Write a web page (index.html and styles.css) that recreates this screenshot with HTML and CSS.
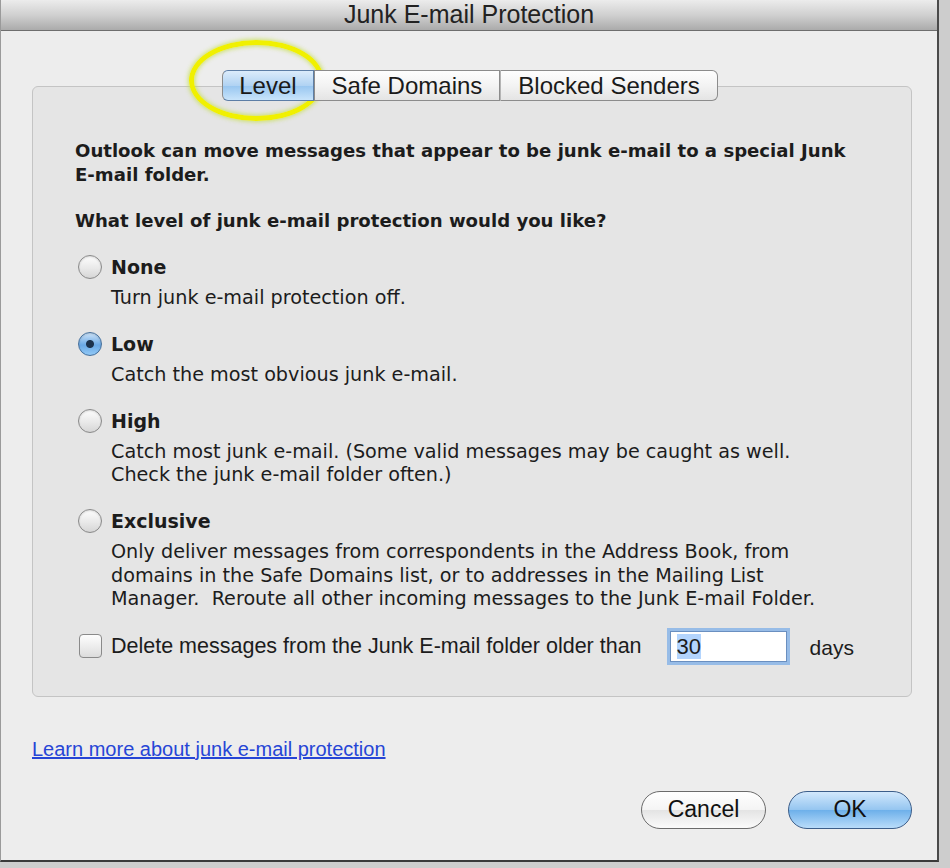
FILE: index.html
```html
<!DOCTYPE html>
<html lang="en">
<head>
    <meta charset="UTF-8">
    <meta name="viewport" content="width=device-width, initial-scale=1.0">
    <title>Junk E-mail Protection</title>
    <link rel="stylesheet" href="styles.css">
</head>
<body>
    <div class="window">
        <div class="titlebar">Junk E-mail Protection</div>
        <div class="content">
            <div class="tabs">
                <span class="tab tab-active">Level</span>
                <span class="tab">Safe Domains</span>
                <span class="tab">Blocked Senders</span>
            </div>
            <div class="tab-box">
                <p class="intro">Outlook can move messages that appear to be junk e-mail to a special Junk<br>E-mail folder.</p>
                <p class="intro">What level of junk e-mail protection would you like?</p>

                <div class="option">
                    <span class="radio"></span>
                    <div>
                        <div class="opt-title">None</div>
                        <div class="opt-desc">Turn junk e-mail protection off.</div>
                    </div>
                </div>
                <div class="option">
                    <span class="radio radio-on"></span>
                    <div>
                        <div class="opt-title">Low</div>
                        <div class="opt-desc">Catch the most obvious junk e-mail.</div>
                    </div>
                </div>
                <div class="option">
                    <span class="radio"></span>
                    <div>
                        <div class="opt-title">High</div>
                        <div class="opt-desc">Catch most junk e-mail. (Some valid messages may be caught as well.<br>Check the junk e-mail folder often.)</div>
                    </div>
                </div>
                <div class="option">
                    <span class="radio"></span>
                    <div>
                        <div class="opt-title">Exclusive</div>
                        <div class="opt-desc">Only deliver messages from correspondents in the Address Book, from<br>domains in the Safe Domains list, or to addresses in the Mailing List<br>Manager.&nbsp; Reroute all other incoming messages to the Junk E-mail Folder.</div>
                    </div>
                </div>

                <div class="delete-row">
                    <span class="checkbox"></span>
                    <span class="delete-label">Delete messages from the Junk E-mail folder older than</span>
                    <span class="days-input"><span class="sel">30</span></span>
                    <span class="days">days</span>
                </div>
            </div>

            <a class="learn-link" href="#">Learn more about junk e-mail protection</a>

            <div class="buttons">
                <button class="btn">Cancel</button>
                <button class="btn btn-default">OK</button>
            </div>
        </div>
        <!-- marker drawn round the Level tab -->
        <div class="highlight-ring"></div>
    </div>
</body>
</html>
```

FILE: styles.css
```css
body {
    margin: 0;
    background-color: #cdcdcd;
    font-family: "DejaVu Sans", sans-serif;
    color: #1c1c1c;
}
.window {
    position: relative;
    width: 936px;
    height: 860px;
    background-color: #ededed;
    border-left: 1px solid #9a9a9a;
    border-right: 2px solid #4a4a4a;
    border-bottom: 2px solid #3a3a3a;
    overflow: hidden;
}
.titlebar {
    height: 30px;
    line-height: 29px;
    text-align: center;
    font-family: "Liberation Sans", Arial, sans-serif;
    font-size: 25px;
    color: #222;
    background: linear-gradient(#ececec, #d0d0d0 50%, #ababab);
    border-bottom: 1px solid #6e6e6e;
}
.content {
    padding: 39px 25px 0 31px;
}

/* segmented tab control */
.tabs {
    position: relative;
    z-index: 1;
    display: flex;
    justify-content: center;
    padding-right: 4px;
    margin-bottom: -15px;
}
.tab {
    height: 29px;
    line-height: 29px;
    padding: 0 17px;
    font-family: "Liberation Sans", Arial, sans-serif;
    font-size: 24px;
    color: #1a1a1a;
    background: linear-gradient(#fefefe, #f3f3f3 50%, #e4e4e4);
    border: 1px solid #8c8c8c;
    border-left: 1px solid #b4b4b4;
}
.tab:first-child {
    padding: 0 16px;
    border-left: 1px solid #8c8c8c;
    border-radius: 6px 0 0 6px;
}
.tab:last-child {
    border-radius: 0 6px 6px 0;
}
.tab-active {
    background: linear-gradient(#dcecfb, #b1d3f3 50%, #98c6f0 51%, #c8e4fb);
    border-color: #5d7ea6;
}
.tab-active + .tab {
    border-left-color: #8c8c8c;
}

.tab-box {
    border: 1px solid #c4c4c4;
    border-radius: 6px;
    background-color: #e5e5e5;
    padding: 52px 30px 31px 42px;
}
.intro {
    margin: 0;
    font-size: 18.1px;
    font-weight: bold;
    line-height: 23.5px;
}
.intro + .intro {
    margin-top: 23px;
}

.option {
    display: grid;
    grid-template-columns: 36px 1fr;
    margin-top: 22.4px;
}
.opt-title {
    font-size: 19px;
    font-weight: bold;
    line-height: 24px;
}
.opt-desc {
    margin-top: 7px;
    font-size: 19.2px;
    line-height: 23.5px;
}
.radio {
    width: 22px;
    height: 22px;
    margin-left: 3px;
    border: 1px solid #8a8a8a;
    border-radius: 50%;
    background: linear-gradient(#fdfdfd, #e9e9e9 55%, #d6d6d6);
    box-shadow: inset 0 1px 2px rgba(0, 0, 0, 0.15);
}
.radio-on {
    border-color: #46709c;
    background:
        radial-gradient(circle, #1d324c 0 3.5px, transparent 4.5px),
        linear-gradient(#cfe5fa, #6aa8e4 55%, #92c9f6);
}

.delete-row {
    display: flex;
    align-items: center;
    margin-top: 17px;
}
.checkbox {
    width: 21px;
    height: 22px;
    margin-left: 4px;
    border: 1px solid #8a8a8a;
    border-radius: 4px;
    background: linear-gradient(#fdfdfd, #ececec 55%, #dcdcdc);
}
.delete-label {
    margin-left: 9px;
    font-family: "Liberation Sans", Arial, sans-serif;
    font-size: 21.5px;
}
.days-input {
    box-sizing: border-box;
    width: 123px;
    height: 37px;
    margin-left: 25px;
    padding-left: 7px;
    border: 3px solid #97bce7;
    box-shadow: inset 0 0 0 1px #6a8fc0;
    background-color: white;
    font-family: "Liberation Sans", Arial, sans-serif;
    font-size: 22px;
    line-height: 31px;
}
.sel {
    background-color: #b3d4fd;
}
.days {
    margin-left: 20px;
    margin-top: 4px;
    font-family: "Liberation Sans", Arial, sans-serif;
    font-size: 21px;
}

.learn-link {
    display: block;
    width: fit-content;
    margin-top: 40px;
    font-family: "Liberation Sans", Arial, sans-serif;
    font-size: 20px;
    line-height: 24px;
    color: #2645d6;
}

.buttons {
    display: flex;
    justify-content: flex-end;
    gap: 22px;
    margin-top: 30px;
}
.btn {
    width: 125px;
    height: 38px;
    padding: 0;
    border: 1px solid #6b6b6b;
    border-radius: 19px;
    background: linear-gradient(#ffffff, #f4f4f4 50%, #e4e4e4 51%, #fbfbfb);
    font-family: "Liberation Sans", Arial, sans-serif;
    font-size: 23px;
    color: #111;
}
.btn-default {
    width: 124px;
    border-color: #3c5e8a;
    background: linear-gradient(#d2e8fc, #94c5f0 50%, #6eb0ea 51%, #b9dcfa);
}

.highlight-ring {
    position: absolute;
    left: 188px;
    top: 40px;
    width: 135px;
    height: 81px;
    box-sizing: border-box;
    border: 5px solid #f0f000;
    border-radius: 50%;
    box-shadow: 0 0 4px 1px rgba(196, 222, 70, 0.8), inset 0 0 4px 1px rgba(196, 222, 70, 0.8);
    pointer-events: none;
}
```
